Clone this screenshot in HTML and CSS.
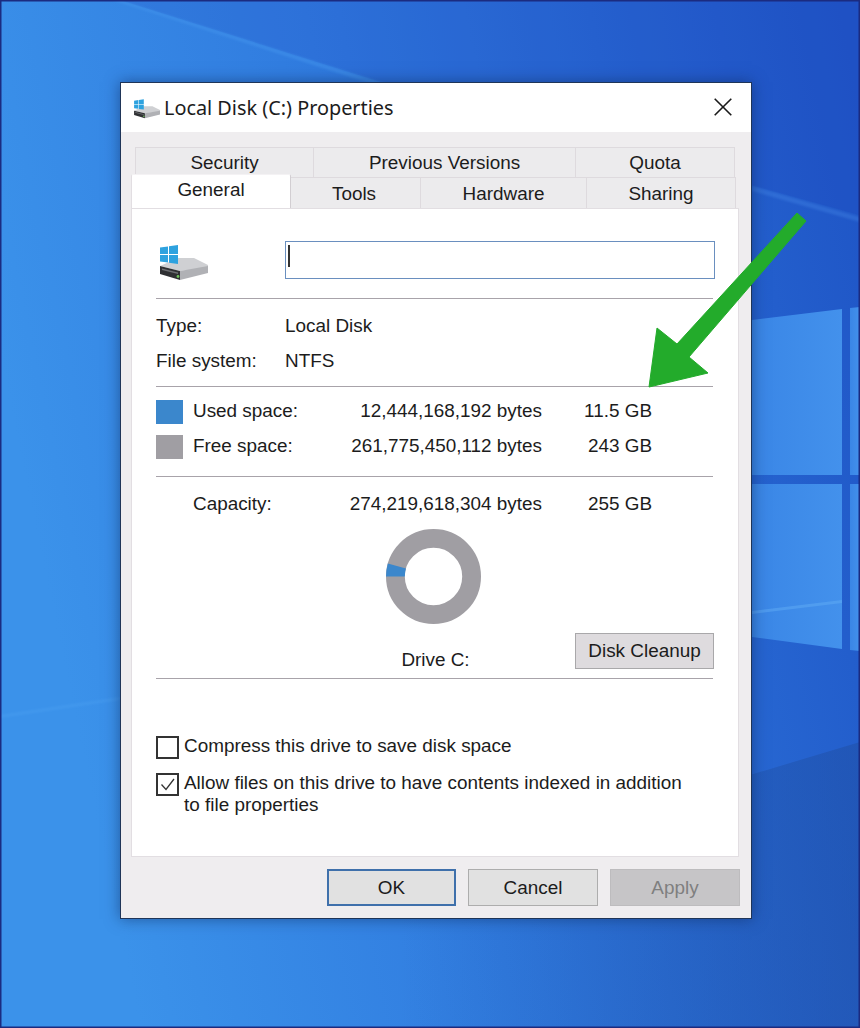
FILE: index.html
```html
<!DOCTYPE html>
<html lang="en">
<head>
    <meta charset="UTF-8">
    <meta name="viewport" content="width=device-width, initial-scale=1.0">
    <title>Local Disk (C:) Properties</title>
    <link rel="stylesheet" href="styles.css">
</head>
<body>
    <div class="desktop">
        <svg class="wallpaper" viewBox="0 0 860 1028" aria-hidden="true">
            <defs>
                <linearGradient id="wallBase" x1="0" y1="0.35" x2="1" y2="0.1">
                    <stop offset="0" stop-color="#3b92ea"/>
                    <stop offset="0.45" stop-color="#2f79de"/>
                    <stop offset="1" stop-color="#1f55c6"/>
                </linearGradient>
                <linearGradient id="wallPane" x1="0" y1="0" x2="1" y2="0">
                    <stop offset="0" stop-color="#3a86e6"/>
                    <stop offset="1" stop-color="#4391ec"/>
                </linearGradient>
                <linearGradient id="wallLower" x1="0" y1="0" x2="1" y2="0">
                    <stop offset="0" stop-color="#1f4ea2" stop-opacity="0"/>
                    <stop offset="1" stop-color="#1f4ea2" stop-opacity="0.5"/>
                </linearGradient>
                <filter id="soft">
                    <feGaussianBlur stdDeviation="1.2"/>
                </filter>
            </defs>
            <rect width="860" height="1028" fill="url(#wallBase)"/>
            <polygon points="0,0 860,0 860,215 750,185 390,85 120,0" fill="#1c3fb8" opacity="0.16"/>
            <polygon points="120,0 390,85 375,85 112,0" fill="#4a9bf0" opacity="0.4" filter="url(#soft)"/>
            <polygon points="752,186 860,217 860,222 752,191" fill="#4d92ee" opacity="0.3" filter="url(#soft)"/>
            <polygon points="0,715 120,697 120,700 0,718" fill="#52a6f4" opacity="0.3" filter="url(#soft)"/>
            <polygon points="400,880 860,742 860,1028 400,1028" fill="url(#wallLower)"/>
            <polygon points="752,320 842,309 842,475 752,475" fill="url(#wallPane)"/>
            <polygon points="850,308 860,307 860,475 850,475" fill="url(#wallPane)"/>
            <polygon points="752,484 842,484 842,649 752,637" fill="url(#wallPane)"/>
            <polygon points="850,484 860,484 860,651 850,650" fill="url(#wallPane)"/>
            <polygon points="752,611 842,600 842,603 752,614" fill="#64b0f6" opacity="0.45"/>
            <rect x="0.75" y="0.75" width="858.5" height="1026.5" fill="none" stroke="#1b2b80" stroke-width="1.5"/>
        </svg>

        <div class="dialog">
            <div class="title-bar">
                <svg class="title-icon" viewBox="0 0 50 38" aria-hidden="true">
                    <use href="#driveIcon"/>
                </svg>
                <span class="title-text">Local Disk (C:) Properties</span>
                <svg class="close-icon" viewBox="0 0 18 18" aria-hidden="true">
                    <path d="M0.7 0.7 L17.3 17.3 M17.3 0.7 L0.7 17.3" stroke="#1a1a1a" stroke-width="1.6" fill="none"/>
                </svg>
            </div>

            <div class="tabs">
                <div class="tab-row tab-row-back">
                    <div class="tab tab-security">Security</div>
                    <div class="tab tab-versions">Previous Versions</div>
                    <div class="tab tab-quota">Quota</div>
                </div>
                <div class="tab-row tab-row-front">
                    <div class="tab tab-general">General</div>
                    <div class="tab tab-tools">Tools</div>
                    <div class="tab tab-hardware">Hardware</div>
                    <div class="tab tab-sharing">Sharing</div>
                </div>
            </div>

            <div class="panel">
                <div class="name-row">
                    <svg class="drive-icon" viewBox="0 0 50 38" aria-hidden="true">
                        <g id="driveIcon">
                            <polygon points="2,23 20,15 36,15 50,22 50,25 22,28" fill="#cfd0d3"/>
                            <polygon points="22,28 50,23 50,30 22,37" fill="#b0b1b5"/>
                            <polygon points="2,23 22,28 22,37 2,31" fill="#2f3033"/>
                            <polygon points="4,25.5 20,29.5 20,31 4,27" fill="#6d6e72"/>
                            <circle cx="20" cy="33.5" r="1.4" fill="#6fbf5a"/>
                            <polygon points="2,4.5 10,3.4 10,11 2,11" fill="#2ea2df"/>
                            <polygon points="11,3.2 20,2 20,11 11,11" fill="#2ea2df"/>
                            <polygon points="2,12 10,12 10,19.6 2,18.5" fill="#2ea2df"/>
                            <polygon points="11,12 20,12 20,21 11,19.8" fill="#2ea2df"/>
                        </g>
                    </svg>
                    <div class="name-box"><span class="caret"></span></div>
                </div>
                <hr class="rule rule-name">

                <div class="info-row"><span>Type:</span><span>Local Disk</span></div>
                <div class="info-row"><span>File system:</span><span>NTFS</span></div>
                <hr class="rule rule-info">

                <div class="space-row">
                    <span class="swatch swatch-used"></span>
                    <span>Used space:</span>
                    <span class="num">12,444,168,192 bytes</span>
                    <span class="num">11.5 GB</span>
                </div>
                <div class="space-row">
                    <span class="swatch swatch-free"></span>
                    <span>Free space:</span>
                    <span class="num">261,775,450,112 bytes</span>
                    <span class="num">243 GB</span>
                </div>
                <hr class="rule rule-space">

                <div class="space-row">
                    <span></span>
                    <span>Capacity:</span>
                    <span class="num">274,219,618,304 bytes</span>
                    <span class="num">255 GB</span>
                </div>

                <div class="chart">
                    <svg class="donut" viewBox="0 0 96 96" aria-hidden="true">
                        <circle cx="48" cy="48" r="38.5" fill="none" stroke="#a09ea3" stroke-width="19"/>
                        <path d="M9.5 48 A38.5 38.5 0 0 1 11 37.4" fill="none" stroke="#3b87cc" stroke-width="19"/>
                    </svg>
                    <div class="drive-label">Drive C:</div>
                    <button class="btn btn-cleanup" type="button">Disk Cleanup</button>
                </div>
                <hr class="rule rule-chart">

                <div class="check-row">
                    <span class="check-box"></span>
                    <span>Compress this drive to save disk space</span>
                </div>
                <div class="check-row">
                    <span class="check-box">
                        <svg viewBox="0 0 19 19" aria-hidden="true">
                            <path d="M3.5 9.5 L8 14.5 L16 4" stroke="#333" stroke-width="1.3" fill="none"/>
                        </svg>
                    </span>
                    <span>Allow files on this drive to have contents indexed in addition<br>to file properties</span>
                </div>
            </div>

            <div class="footer">
                <button class="btn btn-ok" type="button">OK</button>
                <button class="btn btn-cancel" type="button">Cancel</button>
                <button class="btn btn-apply" type="button">Apply</button>
            </div>
        </div>

        <svg class="arrow" viewBox="0 0 860 1028" aria-hidden="true">
            <polygon points="797,213 806,221 689,357 708,373 649,387 657,328 677,344" fill="#23ab2b" stroke="#23ab2b" stroke-width="1" stroke-linejoin="round"/>
        </svg>
    </div>
</body>
</html>
```

FILE: styles.css
```css
* {
    box-sizing: border-box;
}
body {
    margin: 0;
    font-family: "Liberation Sans", Arial, sans-serif;
    font-size: 18.9px;
    color: #1c1c1c;
}
.desktop {
    position: relative;
    width: 860px;
    height: 1028px;
    padding: 82px 0 0 120px;
    overflow: hidden;
}
.wallpaper, .arrow {
    position: absolute;
    left: 0;
    top: 0;
    width: 860px;
    height: 1028px;
}
.arrow {
    pointer-events: none;
}
.dialog {
    position: relative;
    width: 632px;
    height: 837px;
    background-color: #efedef;
    border: 1px solid #1f3558;
    box-shadow: 0 0 14px rgba(15, 40, 90, 0.55);
}
.title-bar {
    display: flex;
    align-items: center;
    height: 49px;
    padding: 0 19px 0 12px;
    background-color: #fff;
}
.title-icon {
    width: 27px;
    height: 21px;
    margin-top: 2px;
}
.title-text {
    margin-left: 4px;
    font-family: "Noto Sans", sans-serif;
    font-size: 19.85px;
    flex: 1;
}
.close-icon {
    width: 18px;
    height: 18px;
    margin-bottom: 1px;
}
.tabs {
    padding: 15px 0 0 14px;
    width: 615px;
}
.tab-row {
    display: flex;
    height: 30px;
}
.tab-row-front {
    height: 31px;
}
.tab {
    display: flex;
    align-items: center;
    justify-content: center;
    background-color: #ecebed;
    border: 1px solid #dedade;
    border-bottom: none;
    border-left: none;
}
.tab-row-front .tab {
    padding-top: 1px;
}
.tab-security {
    width: 179px;
    border-left: 1px solid #dedade;
}
.tab-versions {
    width: 262px;
}
.tab-quota {
    width: 159px;
}
.tab-row-front .tab-general {
    position: relative;
    width: 160px;
    height: 34px;
    margin: -3px 0 0 -4px;
    padding: 0 0 3px;
    background-color: #fff;
    border-top: 1px solid #f4f2f4;
    border-left: 1px solid #e2dee2;
    border-right: 1px solid #d2ced2;
    border-radius: 2px 2px 0 0;
    z-index: 1;
}
.tab-row-front .tab-tools {
    width: 130px;
    padding-right: 3px;
}
.tab-hardware {
    width: 166px;
}
.tab-sharing {
    width: 149px;
    margin-right: -1px;
}
.panel {
    width: 608px;
    height: 649px;
    margin-left: 10px;
    padding: 32px 25px 0 24px;
    background-color: #fff;
    border: 1px solid #e2dee2;
}
.name-row {
    display: flex;
    align-items: center;
    height: 38px;
}
.drive-icon {
    width: 50px;
    height: 38px;
    margin: 4px 0 0 2px;
}
.name-box {
    width: 430px;
    height: 38px;
    margin: 0 -2px 0 77px;
    padding: 3px 2px;
    border: 1px solid #6a8fbf;
}
.caret {
    display: block;
    width: 1.5px;
    height: 22px;
    background-color: #333;
}
.rule {
    height: 1px;
    margin: 0;
    border: none;
    background-color: #a8a3aa;
}
.rule-name {
    margin: 19px 0 10px;
}
.rule-info {
    margin: 7px 0 7px;
}
.rule-space {
    margin: 12px 0 10px;
}
.rule-chart {
    margin: 0 0 56px;
}
.info-row {
    display: grid;
    grid-template-columns: 129px 1fr;
    align-items: center;
    height: 35px;
    padding-bottom: 1px;
}
.space-row {
    display: grid;
    grid-template-columns: 37px 150px 199px 110px;
    align-items: center;
    height: 35px;
    padding-bottom: 1px;
}
.num {
    text-align: right;
    white-space: nowrap;
}
.swatch {
    display: block;
    width: 27px;
    height: 24px;
    margin-top: 1px;
}
.swatch-used {
    background-color: #3b87cc;
}
.swatch-free {
    background-color: #a09ea3;
}
.chart {
    display: grid;
    grid-template-columns: 230px 95px 1fr;
    padding: 7px 0 7px;
}
.donut {
    grid-column: 2;
    width: 95px;
    height: 95px;
}
.drive-label {
    grid-column: 2;
    justify-self: center;
    margin: 25px 0 0 4px;
    line-height: 22px;
    white-space: nowrap;
}
.btn {
    height: 37px;
    padding: 0;
    font-family: inherit;
    font-size: inherit;
    color: #1c1c1c;
    background-color: #e1e1e1;
    border: 1px solid #adadad;
}
.btn-cleanup {
    grid-column: 3;
    grid-row: 1 / 3;
    align-self: end;
    justify-self: end;
    width: 139px;
    height: 36px;
    margin: 0 -1px 2px 0;
    background-color: #dedbde;
    border: 1px solid #a9a8aa;
}
.check-row {
    display: flex;
    line-height: 22px;
    margin-bottom: 13px;
}
.check-box {
    display: block;
    flex: none;
    width: 23px;
    height: 23px;
    margin: 1px 5px 0 0;
    background-color: #fff;
    border: 2px solid #333;
}
.check-box svg {
    display: block;
    width: 19px;
    height: 19px;
}
.footer {
    display: flex;
    gap: 12px;
    justify-content: flex-end;
    margin-top: 12px;
    padding-right: 11px;
}
.footer .btn {
    width: 130px;
}
.footer .btn-ok {
    width: 129px;
    border: 2px solid #3f70ab;
}
.btn-apply {
    color: #7f7f7f;
    background-color: #c6c5c7;
    border-color: #bdbcbe;
}
```
